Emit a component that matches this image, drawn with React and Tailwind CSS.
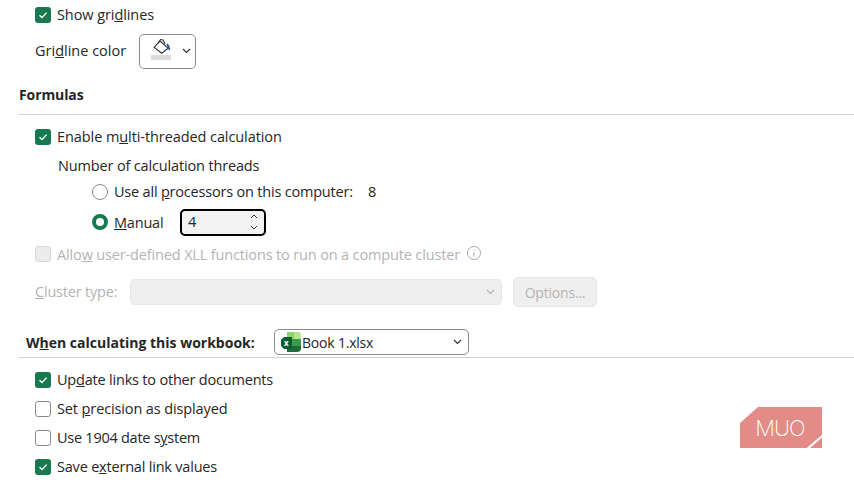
const Check = ({ on, off }) => (
  <span className={`box-border w-4 h-4 shrink-0 rounded-[3px] flex items-center justify-center ${on ? "bg-[#18794e]" : off ? "border border-[#d8d8d8] bg-[#ececec]" : "border border-[#8a8a8a] bg-white"}`}>
    {on && (
      <svg width="12" height="12" viewBox="0 0 12 12" fill="none">
        <path d="M2.5 6.2 L5 8.6 L9.6 3.6" stroke="#fff" strokeWidth="1.4" />
      </svg>
    )}
  </span>
);

const Chevron = ({ color = "#333" }) => (
  <svg width="9" height="6" viewBox="0 0 9 6" fill="none">
    <path d="M1 1 L4.5 4.5 L8 1" stroke={color} strokeWidth="1.2" />
  </svg>
);

const CheckRow = ({ on, children, cls }) => (
  <div className={`flex items-center pl-[35px] gap-[6px] ${cls}`}>
    <Check on={on} />
    <span>{children}</span>
  </div>
);

export default function App() {
  return (
    <div className="relative w-[854px] h-[480px] overflow-hidden bg-white text-[#262626] text-[14.5px] tracking-[-0.2px] font-['Open_Sans','Noto_Sans',sans-serif]">
      <CheckRow on cls="h-[30px] tracking-[-0.08px]">Show gri<u>d</u>lines</CheckRow>

      <div className="h-[42px] flex items-center pl-[35px]">
        <span className="w-[104px] tracking-[0px]">Gri<u>d</u>line color</span>
        <div className="box-border w-[57px] h-[35px] rounded-[5px] border border-[#8c8c8c] flex items-center pl-[11px] gap-[9px]">
          <svg width="22" height="28" viewBox="0 0 22 28" fill="none">
            <path d="M3 10.3 L9 4 L17.3 11.3 L10.7 16.3 Z" stroke="#333" strokeWidth="1.1" />
            <path d="M7 6 L9.5 2.5 L12 3 L14 7" stroke="#333" strokeWidth="1.1" />
            <path d="M16 7 Q18 9 18.5 13" stroke="#2f5f8f" strokeWidth="1.8" />
            <rect x="0" y="18" width="20" height="5" fill="#dcdcdc" />
          </svg>
          <Chevron />
        </div>
      </div>

      <div className="box-border ml-[19px] h-[43px] pt-[2px] border-b border-[#d0d0d0] flex items-center font-bold text-[14px] tracking-[-0.1px]">Formulas</div>

      <CheckRow on cls="mt-[7px] h-[30px] tracking-[-0.08px]">Enable m<u>u</u>lti-threaded calculation</CheckRow>

      <div className="h-[28px] flex items-center pl-[58px] tracking-[-0.15px]">Number of calculation threads</div>

      <div className="h-[24px] flex items-center pl-[92px]">
        <span className="box-border w-4 h-4 rounded-full border border-[#8a8a8a] bg-white" />
        <span className="ml-[6px] w-[254px]">Use all <u>p</u>rocessors on this computer:</span>
        <span>8</span>
      </div>

      <div className="h-[36px] flex items-center pl-[92px]">
        <span className="box-border w-4 h-4 rounded-full border-[4px] border-[#18794e] bg-white" />
        <span className="ml-[6px] w-[66px] pt-[2px]"><u>M</u>anual</span>
        <div className="box-border w-[86px] h-[27px] rounded-[5px] border-2 border-black bg-[#f3f3f3] flex items-center justify-between pl-[6px] pr-[6px]">
          <span>4</span>
          <div className="flex flex-col gap-[6px]">
            <svg width="8" height="5" viewBox="0 0 8 5" fill="none"><path d="M1 4 L4 1 L7 4" stroke="#333" strokeWidth="1" /></svg>
            <svg width="8" height="5" viewBox="0 0 8 5" fill="none"><path d="M1 1 L4 4 L7 1" stroke="#333" strokeWidth="1" /></svg>
          </div>
        </div>
      </div>

      <div className="h-[28px] flex items-center pl-[35px] gap-[6px] text-[#b4b4b4] tracking-[-0.15px]">
        <Check off />
        <span className="pt-[2px]">Allo<u>w</u> user-defined XLL functions to run on a compute cluster</span>
        <svg width="16" height="16" viewBox="0 0 16 16" fill="none" className="mb-[3px]">
          <circle cx="8" cy="8" r="6.5" stroke="#a8a8a8" />
          <rect x="7.5" y="7" width="1" height="4.5" fill="#a8a8a8" />
          <rect x="7.5" y="4.5" width="1" height="1.2" fill="#a8a8a8" />
        </svg>
      </div>

      <div className="h-[48px] flex items-center pl-[35px] text-[#b4b4b4]">
        <span className="w-[95px]"><u>C</u>luster type:</span>
        <div className="box-border w-[372px] h-[26px] rounded-[5px] bg-[#efefef] border border-[#e6e6e6] flex items-center justify-end pr-[6px]">
          <Chevron color="#b4b4b4" />
        </div>
        <div className="box-border ml-[11px] w-[84px] h-[30px] rounded-[5px] bg-[#efefef] border border-[#e6e6e6] flex items-center justify-center text-[14px]">Options...</div>
      </div>

      <div className="box-border ml-[19px] h-[42px] pt-[11px] border-b border-[#d0d0d0] flex items-center">
        <span className="ml-[7px] w-[248px] font-bold text-[14px] tracking-[0px]">W<u>h</u>en calculating this workbook:</span>
        <div className="box-border w-[195px] h-[26px] rounded-[5px] border border-[#8c8c8c] flex items-center pl-[6px] pr-[6px]">
          <svg width="20" height="20" viewBox="0 0 20 20" className="shrink-0">
            <path d="M6 0 H16 Q20 0 20 4 V7 H6 Z" fill="#8fd36a" />
            <path d="M13 0 H16 Q20 0 20 4 V7 H13 Z" fill="#b5e58f" />
            <rect x="6" y="7" width="14" height="7" fill="#3c9a4d" />
            <path d="M6 14 H20 V16 Q20 20 16 20 H6 Z" fill="#1d6b38" />
            <path d="M0 8 L3 5 H11 V17 H3 L0 14 Z" fill="#0e5c36" />
            <text x="3" y="14" fontSize="8" fontWeight="700" fill="#fff">x</text>
          </svg>
          <span className="ml-[1px] flex-1 text-[14px]">Book 1.xlsx</span>
          <Chevron />
        </div>
      </div>

      <CheckRow on cls="mt-2 h-[28px]">Up<u>d</u>ate links to other documents</CheckRow>
      <CheckRow cls="h-[30px] tracking-[-0.12px]">Set <u>p</u>recision as displayed</CheckRow>
      <CheckRow cls="h-[28px] tracking-[-0.26px]">Use 1904 date s<u>y</u>stem</CheckRow>
      <CheckRow on cls="h-[30px]">Save e<u>x</u>ternal link values</CheckRow>

      <div className="absolute left-[740px] top-[407px] w-[82px] h-[41px] flex items-center justify-center">
        <svg width="82" height="41" viewBox="0 0 82 41" className="absolute inset-0">
          <path d="M18 0 H82 V28 L67 41 H0 V16 Z" fill="#e38b86" />
          <path d="M82 30 V41 H69 Z" fill="#e38b86" />
          <path d="M82 28 L67 41 H70 L82 30.5 Z" fill="#fff" />
        </svg>
        <span className="relative text-white text-[22px] leading-none font-extralight tracking-[-1px] font-['Inter',sans-serif] ml-[-2px]">MUO</span>
      </div>
    </div>
  );
}
